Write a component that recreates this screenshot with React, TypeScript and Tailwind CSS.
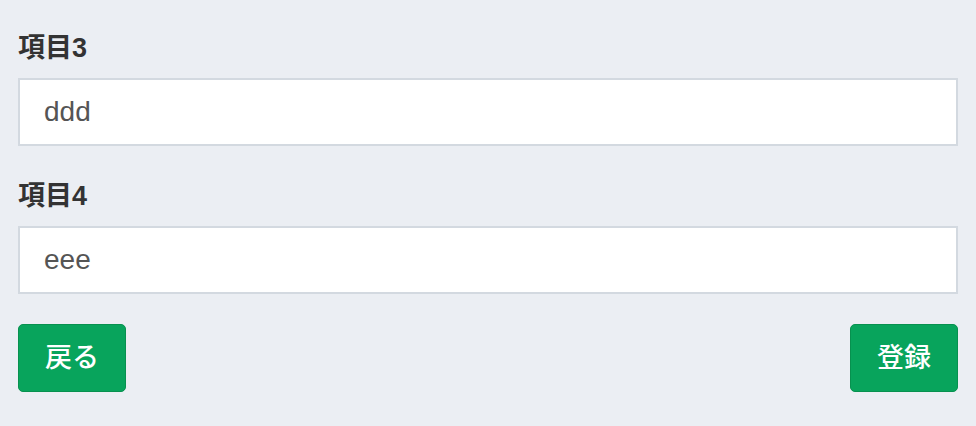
const font = {
  fontFamily: '"Liberation Sans", "Noto Sans CJK JP", sans-serif',
}

const Field = ({ label, value }: { label: string; value: string }) => (
  <div className="flex flex-col">
    <label className="h-[36px] text-[27px] leading-[36px] font-bold text-[#333]">{label}</label>
    <input
      readOnly
      value={value}
      className="mt-3 h-[68px] w-full border-2 border-[#d3d9e0] bg-white px-6 text-[28px] text-[#555] outline-none"
      style={font}
    />
  </div>
)

const Button = ({ children }: { children: string }) => (
  <button className="h-[68px] w-[108px] rounded-[5px] border border-[#07914f] bg-[#08a45c] text-[27px] font-medium text-white">
    {children}
  </button>
)

export default function App() {
  return (
    <div className="min-h-screen bg-[#ebeef3] px-[18px] pt-[30px]" style={font}>
      <Field label="項目3" value="ddd" />
      <div className="mt-8">
        <Field label="項目4" value="eee" />
      </div>
      <div className="mt-[30px] flex justify-between">
        <Button>戻る</Button>
        <Button>登録</Button>
      </div>
    </div>
  )
}
